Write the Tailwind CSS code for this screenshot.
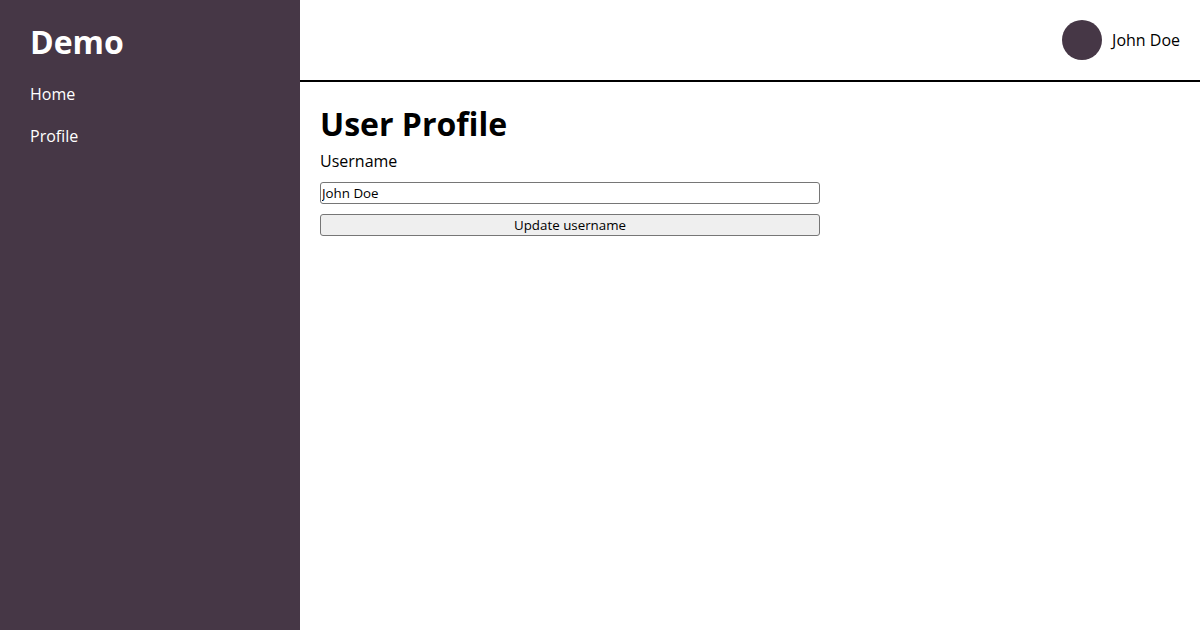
<!DOCTYPE html>
<html lang="en">
<head>
    <meta charset="UTF-8">
    <title>Demo | User Profile</title>
    <script src="https://cdn.jsdelivr.net/npm/@tailwindcss/browser@4"></script>
</head>
<body class="font-['Open_Sans',sans-serif] text-black bg-white">
    <div class="flex h-[630px] overflow-hidden">
        <!-- Sidebar -->
        <aside class="w-[300px] shrink-0 bg-[#463746] text-white px-[30px] pt-5">
            <h2 class="text-[32px] leading-11 font-bold mb-[18px]">Demo</h2>
            <nav class="flex flex-col gap-[18px]">
                <a href="#" class="text-base leading-6">Home</a>
                <a href="#" class="text-base leading-6">Profile</a>
            </nav>
        </aside>

        <div class="flex-1 flex flex-col">
            <!-- Header -->
            <header class="h-[82px] border-b-2 border-black flex items-center justify-end gap-[10px] px-5">
                <div class="w-10 h-10 rounded-full bg-[#463746]"></div>
                <span class="text-base">John Doe</span>
            </header>

            <!-- Content -->
            <main class="p-5">
                <h1 class="text-[32px] leading-11 font-bold">User Profile</h1>
                <form class="w-[500px] flex flex-col">
                    <label for="username" class="text-base leading-6 mb-[9px] mt-[3px]">Username</label>
                    <input id="username" type="text" value="John Doe" class="h-[22px] border border-[#767676] rounded-[3px] px-[1px] text-[13.33px] mb-[10px]">
                    <button type="button" class="h-[22px] border border-[#767676] rounded-[3px] bg-[#efefef] text-[13.33px] leading-[18px]">Update username</button>
                </form>
            </main>
        </div>
    </div>
</body>
</html>
